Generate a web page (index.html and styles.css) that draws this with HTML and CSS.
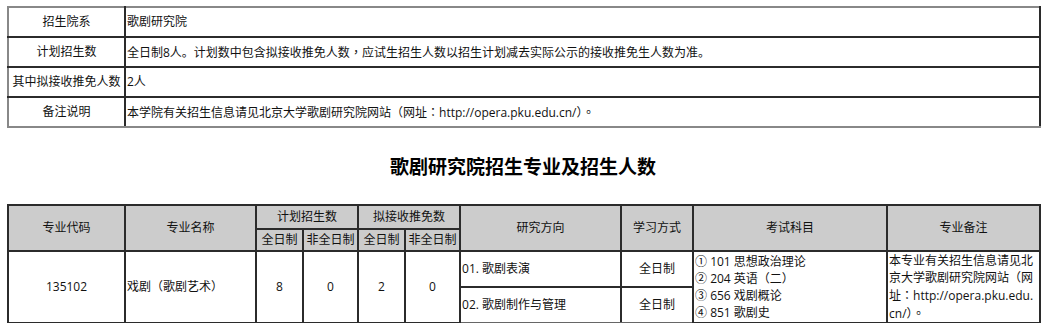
FILE: index.html
```html
<!DOCTYPE html>
<html lang="zh-CN">
<head>
<meta charset="utf-8">
<title>歌剧研究院招生</title>
<link rel="stylesheet" href="styles.css">
</head>
<body>
<div class="page">
  <table class="info">
    <colgroup><col class="c-label"><col class="c-value"></colgroup>
    <tr><td class="label">招生院系</td><td class="value">歌剧研究院</td></tr>
    <tr><td class="label">计划招生数</td><td class="value">全日制8人。计划数中包含拟接收推免人数<span class="pc" lang="zh-TW">，</span>应试生招生人数以招生计划减去实际公示的接收推免生人数为准。</td></tr>
    <tr><td class="label">其中拟接收推免人数</td><td class="value">2人</td></tr>
    <tr><td class="label">备注说明</td><td class="value">本学院有关招生信息请见北京大学歌剧研究院网站（网址<span class="pc" lang="zh-TW">：</span>http://opera.pku.edu.cn/）<span class="pc" lang="zh-TW">。</span></td></tr>
  </table>

  <h1 class="title">歌剧研究院招生专业及招生人数</h1>

  <table class="majors">
    <colgroup>
      <col class="w117"><col class="w131"><col class="w47"><col class="w55"><col class="w47"><col class="w55"><col class="w161"><col class="w72"><col class="w194"><col class="w153">
    </colgroup>
    <tr class="h1">
      <th rowspan="2">专业代码</th>
      <th rowspan="2">专业名称</th>
      <th colspan="2">计划招生数</th>
      <th colspan="2">拟接收推免数</th>
      <th rowspan="2">研究方向</th>
      <th rowspan="2">学习方式</th>
      <th rowspan="2">考试科目</th>
      <th rowspan="2">专业备注</th>
    </tr>
    <tr class="h2">
      <th>全日制</th><th>非全日制</th><th>全日制</th><th>非全日制</th>
    </tr>
    <tr class="r">
      <td rowspan="2" class="center">135102</td>
      <td rowspan="2" class="left">戏剧（歌剧艺术）</td>
      <td rowspan="2" class="center">8</td>
      <td rowspan="2" class="center">0</td>
      <td rowspan="2" class="center">2</td>
      <td rowspan="2" class="center">0</td>
      <td class="left">01. 歌剧表演</td>
      <td class="center">全日制</td>
      <td rowspan="2" class="left lines">① 101 思想政治理论<br>② 204 英语（二）<br>③ 656 戏剧概论<br>④ 851 歌剧史</td>
      <td rowspan="2" class="left lines">本专业有关招生信息请见北<br>京大学歌剧研究院网站（网<br>址<span class="pc" lang="zh-TW">：</span>http://opera.pku.edu.<br>cn/）<span class="pc" lang="zh-TW">。</span></td>
    </tr>
    <tr class="r">
      <td class="left">02. 歌剧制作与管理</td>
      <td class="center">全日制</td>
    </tr>
  </table>
</div>
</body>
</html>
```

FILE: styles.css
```css
html, body {
  margin: 0;
  padding: 0;
  background: #fff;
}
body {
  font-family: "Open Sans", "Noto Sans CJK SC", sans-serif;
  font-size: 12px;
  color: #111;
}
.page {
  padding: 6px 7px 0 7px;
  width: 1032px;
}
table {
  border-collapse: collapse;
  table-layout: fixed;
  width: 1032px;
}
td, th {
  border: 2px solid #2b2b2b;
  padding: 0 1px;
  vertical-align: middle;
  white-space: nowrap;
  overflow: hidden;
}
.pc {
  font-family: "Noto Sans CJK TC", "Noto Sans CJK SC", sans-serif;
}
.info {
  border-top: 2px solid #888;
  border-left: 2px solid #888;
  border-bottom: 2px solid #888;
}
.c-label { width: 117px; }
.c-value { width: 915px; }
.info tr { height: 30px; }
.info td { line-height: 16px; }
.info td:first-child { border-left-color: #888; }
.info tr:first-child td { border-top-color: #888; }
.info tr:last-child td { border-bottom-color: #888; }
.label { text-align: center; }
.value { text-align: left; }

.title {
  margin: 0;
  padding: 26px 0 24px 0;
  font-size: 19px;
  line-height: 26px;
  font-weight: bold;
  text-align: center;
  color: #000;
}

.w117 { width: 117px; }
.w131 { width: 131px; }
.w47 { width: 47px; }
.w55 { width: 55px; }
.w161 { width: 161px; }
.w72 { width: 72px; }
.w194 { width: 194px; }
.w153 { width: 153px; }

.majors th {
  background: #cccccc;
  font-weight: normal;
  text-align: center;
  line-height: 16px;
}
.majors .h1 { height: 24px; }
.majors .h2 { height: 22px; }
.majors .r { height: 34px; }
.majors td { line-height: 16px; }
.majors tr:last-child td { border-bottom-color: #666; }
.center { text-align: center; }
.left { text-align: left; }
.lines { line-height: 17px !important; }
```
